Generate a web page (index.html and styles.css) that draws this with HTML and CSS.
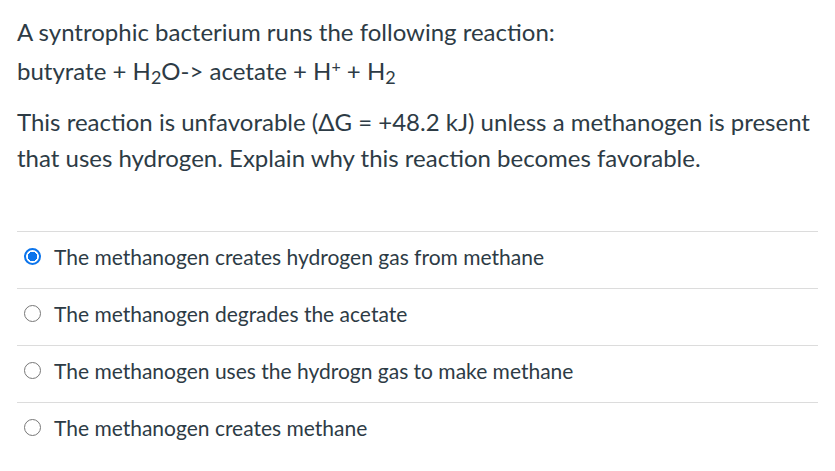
FILE: index.html
```html
<!DOCTYPE html>
<html>
<head>
<meta charset="utf-8">
<link rel="stylesheet" href="styles.css">
</head>
<body>
<div class="question">
  <p class="q1">A syntrophic bacterium runs the following reaction:<br>butyrate + H<sub>2</sub>O-&gt; acetate + H<sup>+</sup> + H<sub>2</sub></p>
  <p class="q2">This reaction is unfavorable (ΔG = +48.2 kJ) unless a methanogen is present that uses hydrogen. Explain why this reaction becomes favorable.</p>
</div>
<div class="answers">
  <div class="answer"><span class="radio checked"></span><span class="label">The methanogen creates hydrogen gas from methane</span></div>
  <div class="answer"><span class="radio"></span><span class="label">The methanogen degrades the acetate</span></div>
  <div class="answer"><span class="radio"></span><span class="label">The methanogen uses the hydrogn gas to make methane</span></div>
  <div class="answer"><span class="radio"></span><span class="label">The methanogen creates methane</span></div>
</div>
</body>
</html>
```
FILE: styles.css
```css
html, body { margin: 0; padding: 0; background: #fff; }
body {
  font-family: Lato, "Liberation Sans", sans-serif;
  color: #2d3b45;
  padding: 0 17px;
}
.question { font-size: 24px; }
.q1 { margin: 0; padding-top: 12px; line-height: 39px; }
.q2 { margin: 0; padding-top: 14px; line-height: 36px; }
sub, sup { font-size: 18px; line-height: 0; }
sub { vertical-align: -4px; }
sup { vertical-align: 8px; font-size: 16px; }
.answers { margin-top: 55px; width: 801px; }
.answer {
  box-sizing: border-box;
  border-top: 1px solid #dcdcdc;
  height: 57px;
  padding-bottom: 7px;
  display: flex;
  align-items: center;
  padding-left: 7px;
  font-size: 21px;
}
.radio {
  box-sizing: border-box;
  width: 17px; height: 17px;
  border: 1.5px solid #777;
  border-radius: 50%;
  margin-right: 13px;
  flex: none;
}
.radio.checked {
  border: 2px solid #0b74ec;
  background: radial-gradient(circle, #0b74ec 0 4.5px, #fff 5px);
}
```
